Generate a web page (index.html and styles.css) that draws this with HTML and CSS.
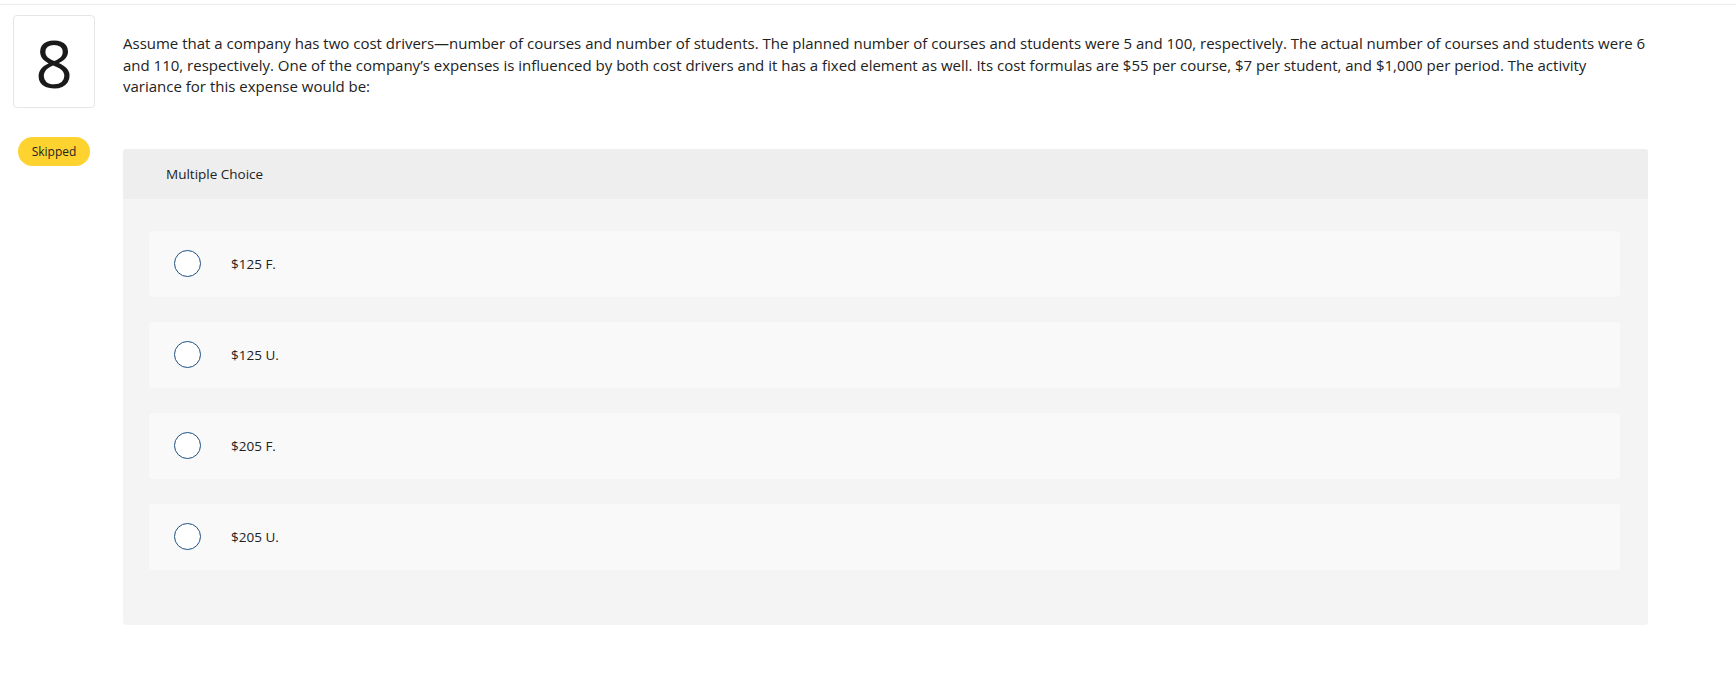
FILE: index.html
```html
<!DOCTYPE html>
<html lang="en">
<head>
<meta charset="UTF-8" />
<title>Question 8</title>
<link rel="stylesheet" href="styles.css">
</head>
<body>

<div class="topbar"></div>

<div class="question">
  <div class="side">
    <div class="qnum">8</div>
    <div class="badge">Skipped</div>
  </div>

  <div class="main">
    <p class="prompt">Assume that a company has two cost drivers—number of courses and number of students. The planned number of courses and students were 5 and 100, respectively. The actual number of courses and students were 6 and 110, respectively. One of the company’s expenses is influenced by both cost drivers and it has a fixed element as well. Its cost formulas are $55 per course, $7 per student, and $1,000 per period. The activity variance for this expense would be:</p>

    <div class="panel">
      <div class="panel-head">Multiple Choice</div>
      <div class="panel-body">
        <label class="choice"><span class="radio"></span><span class="choice-text">$125 F.</span></label>
        <label class="choice"><span class="radio"></span><span class="choice-text">$125 U.</span></label>
        <label class="choice"><span class="radio"></span><span class="choice-text">$205 F.</span></label>
        <label class="choice"><span class="radio"></span><span class="choice-text">$205 U.</span></label>
      </div>
    </div>
  </div>
</div>

</body>
</html>
```

FILE: styles.css
```css
html, body {
  margin: 0;
  padding: 0;
  background: #fff;
  color: #222;
  font-family: "Open Sans", "Liberation Sans", sans-serif;
}

.topbar {
  height: 4px;
  border-bottom: 1px solid #ececec;
}

.question {
  display: flex;
  padding-top: 10px;
}

.side {
  width: 82px;
  margin-left: 13px;
  display: flex;
  flex-direction: column;
  align-items: center;
}

.qnum {
  width: 80px;
  height: 91px;
  border: 1px solid #e6e6e6;
  border-radius: 4px;
  display: flex;
  align-items: center;
  justify-content: center;
  font-size: 66px;
  font-weight: 400;
  color: #1a1a1a;
}

.badge {
  margin-top: 29px;
  width: 72px;
  height: 29px;
  border-radius: 15px;
  background: #fed330;
  display: flex;
  align-items: center;
  justify-content: center;
  font-size: 12px;
  color: #222;
}

.main {
  margin-left: 28px;
  width: 1525px;
}

.prompt {
  margin: 18px 0 0;
  font-size: 15px;
  line-height: 21.5px;
  color: #222;
}

.panel {
  margin-top: 51px;
  border-radius: 3px;
  overflow: hidden;
  background: #f4f4f4;
}

.panel-head {
  height: 50px;
  background: #eeeeee;
  display: flex;
  align-items: center;
  padding-left: 43px;
  font-size: 13.5px;
}

.panel-body {
  display: flex;
  flex-direction: column;
  gap: 25px;
  padding: 32px 28px 55px 26px;
}

.choice {
  height: 66px;
  background: #f9f9f9;
  border-radius: 4px;
  display: flex;
  align-items: center;
  padding-left: 25px;
}

.radio {
  width: 25px;
  height: 25px;
  border: 1.5px solid #1d4f82;
  border-radius: 50%;
  background: #fff;
}

.choice-text {
  margin-left: 30px;
  font-size: 13.5px;
}
```
